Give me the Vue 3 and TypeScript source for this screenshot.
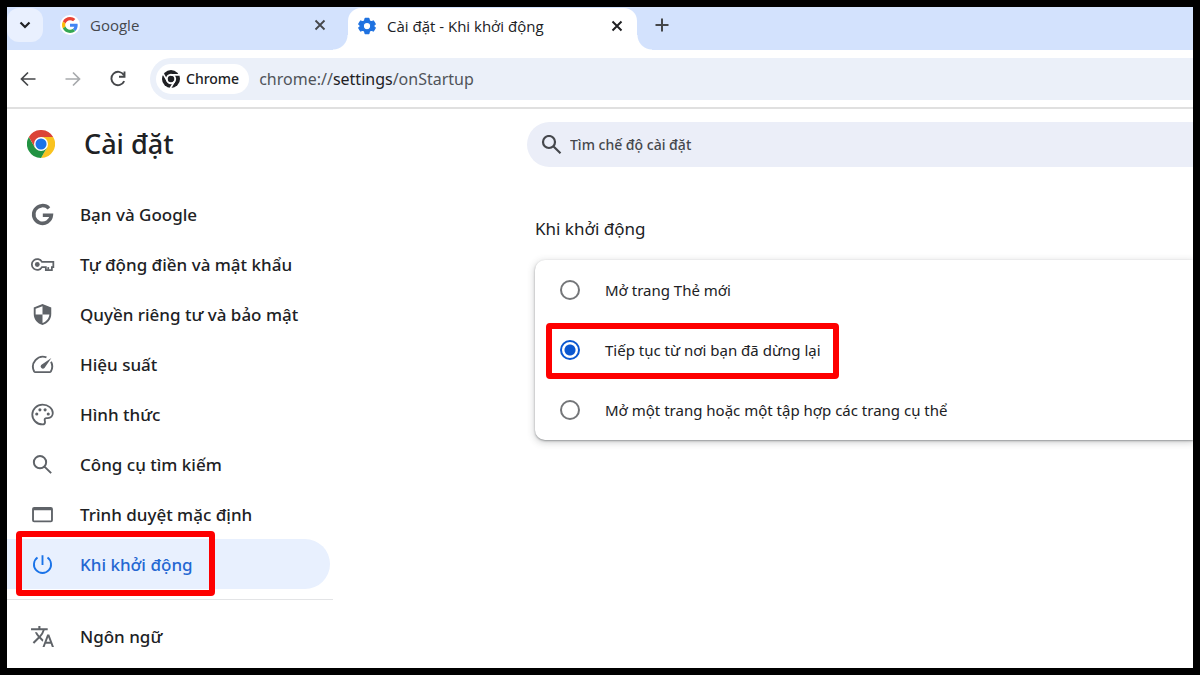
<script setup lang="ts">
import { ref } from 'vue'

interface NavItem {
  id: string
  label: string
  icon: string
}

const mainNav: NavItem[] = [
  { id: 'people', label: 'Bạn và Google', icon: 'google' },
  { id: 'autofill', label: 'Tự động điền và mật khẩu', icon: 'key' },
  { id: 'privacy', label: 'Quyền riêng tư và bảo mật', icon: 'shield' },
  { id: 'performance', label: 'Hiệu suất', icon: 'gauge' },
  { id: 'appearance', label: 'Hình thức', icon: 'palette' },
  { id: 'search', label: 'Công cụ tìm kiếm', icon: 'search' },
  { id: 'defaultBrowser', label: 'Trình duyệt mặc định', icon: 'window' },
  { id: 'onStartup', label: 'Khi khởi động', icon: 'power' },
]
const moreNav: NavItem[] = [{ id: 'languages', label: 'Ngôn ngữ', icon: 'translate' }]
const navGroups = [mainNav, moreNav]

const options = [
  { value: 'newTab', label: 'Mở trang Thẻ mới' },
  { value: 'continue', label: 'Tiếp tục từ nơi bạn đã dừng lại' },
  { value: 'pages', label: 'Mở một trang hoặc một tập hợp các trang cụ thể' },
]

const current = ref('onStartup')
const startup = ref('continue')
const url = ref('chrome://settings/onStartup')
const query = ref('')
</script>

<template>
  <div class="window">
    <header class="tab-strip">
      <button class="tab-search" type="button" aria-label="Tìm kiếm thẻ">
        <svg width="14" height="14" viewBox="0 0 14 14"><path d="M2.500 4.500 7 9l4.500-4.500" fill="none" stroke="currentColor" stroke-width="2.200" /></svg>
      </button>
      <div class="tab tab-google">
        <span class="favicon-disc">
          <svg width="16" height="16" viewBox="0 0 48 48">
            <path fill="#EA4335" d="M24 9.500c3.540 0 6.710 1.220 9.210 3.600l6.850-6.850C35.900 2.380 30.470 0 24 0 14.620 0 6.510 5.380 2.560 13.220l7.980 6.190C12.430 13.720 17.740 9.500 24 9.500z" />
            <path fill="#4285F4" d="M46.980 24.550c0-1.570-.15-3.090-.38-4.550H24v9.020h12.940c-.58 2.960-2.260 5.480-4.780 7.180l7.730 6c4.510-4.180 7.090-10.360 7.090-17.650z" />
            <path fill="#FBBC05" d="M10.530 28.590c-.48-1.450-.76-2.990-.76-4.590s.27-3.140.76-4.590l-7.980-6.190C.92 16.460 0 20.120 0 24c0 3.880.92 7.540 2.560 10.780l7.970-6.190z" />
            <path fill="#34A853" d="M24 48c6.480 0 11.930-2.130 15.890-5.810l-7.730-6c-2.150 1.450-4.920 2.300-8.160 2.300-6.260 0-11.570-4.220-13.470-9.910l-7.980 6.190C6.510 42.620 14.620 48 24 48z" />
          </svg>
        </span>
        <span class="tab-title">Google</span>
        <button class="icon-button" type="button" aria-label="Đóng thẻ Google">
          <svg width="12" height="12" viewBox="0 0 12 12"><path d="m1.500 1.500 9 9m0-9-9 9" stroke="currentColor" stroke-width="1.800" /></svg>
        </button>
      </div>
      <div class="tab tab-active">
        <svg class="gear" width="20" height="20" viewBox="0 0 24 24">
          <path fill="#1f72e0" stroke="#1f72e0" stroke-width="1.500" stroke-linejoin="round" fill-rule="evenodd" d="M9.800 2.800h4.400l.7 3 1.900 1.100 2.900-.9 2.200 3.800-2.200 2.100v.2l2.200 2.100-2.200 3.800-2.900-.9-1.900 1.100-.7 3H9.800l-.7-3-1.900-1.100-2.900.9-2.200-3.800 2.200-2.100v-.2L2.100 9.800 4.300 6l2.900.9 1.900-1.100zM12 7.500a4.500 4.500 0 1 0 0 9 4.500 4.500 0 0 0 0-9z" />
        </svg>
        <span class="tab-title">Cài đặt - Khi khởi động</span>
        <button class="icon-button" type="button" aria-label="Đóng thẻ Cài đặt">
          <svg width="12" height="12" viewBox="0 0 12 12"><path d="m1.500 1.500 9 9m0-9-9 9" stroke="currentColor" stroke-width="2" /></svg>
        </button>
      </div>
      <button class="icon-button new-tab" type="button" aria-label="Thẻ mới">
        <svg width="14" height="14" viewBox="0 0 14 14"><path d="M7 .5v13M.5 7h13" stroke="currentColor" stroke-width="2" /></svg>
      </button>
    </header>

    <div class="toolbar">
      <button class="icon-button" type="button" aria-label="Quay lại">
        <svg width="16" height="16" viewBox="0 0 16 16"><path d="M15.500 8H2M8 1.500 1.500 8 8 14.500" fill="none" stroke="currentColor" stroke-width="1.700" /></svg>
      </button>
      <button class="icon-button" type="button" aria-label="Tiến" disabled>
        <svg width="16" height="16" viewBox="0 0 16 16"><path d="M.5 8H14M8 1.500 14.500 8 8 14.500" fill="none" stroke="currentColor" stroke-width="1.700" /></svg>
      </button>
      <button class="icon-button" type="button" aria-label="Tải lại">
        <svg width="18" height="18" viewBox="0 0 18 18"><path d="M14.800 5A6.700 6.700 0 1 0 15.200 11.200M15.500 1.500v5.300h-5.500" fill="none" stroke="currentColor" stroke-width="1.900" /></svg>
      </button>
      <div class="omnibox">
        <button class="chip" type="button">
          <svg width="18" height="18" viewBox="0 0 18 18">
            <circle cx="9" cy="9" r="9" fill="#202124" />
            <circle cx="9" cy="9" r="4.200" fill="none" stroke="#fff" stroke-width="1.900" />
            <path d="M9 4.800h8.500M5.400 11.100 1.200 3.900M12.600 11.100l-4.200 7.200" stroke="#fff" stroke-width="1.700" fill="none" />
          </svg>
          <span>Chrome</span>
        </button>
        <div class="url">
          <input v-model="url" type="text" aria-label="Thanh địa chỉ" spellcheck="false" />
          <span v-if="url === 'chrome://settings/onStartup'" class="url-display" aria-hidden="true">chrome://<b>settings</b>/onStartup</span>
        </div>
      </div>
    </div>

    <div class="page">
      <aside class="sidebar">
        <div class="brand">
          <svg width="28" height="28" viewBox="0 0 48 48">
            <path fill="#F9C31F" d="M24 12h20.800A24 24 0 0 1 24 48l10.400-18z" />
            <path fill="#229342" d="M3.200 12A24 24 0 0 0 24 48l10.400-18L24 24l-10.400 6z" />
            <path fill="#DB4437" d="M3.200 12 13.600 30 24 24V12h20.800A24 24 0 0 0 3.200 12z" />
            <circle cx="24" cy="24" r="12" fill="#fff" />
            <circle cx="24" cy="24" r="9.500" fill="#1a73e8" />
          </svg>
          <h1>Cài đặt</h1>
        </div>

        <nav aria-label="Cài đặt">
          <ul v-for="(group, index) in navGroups" :key="index">
            <li v-for="item in group" :key="item.id">
              <a
                :href="'#' + item.id"
                :class="{ selected: item.id === current }"
                :aria-current="item.id === current ? 'page' : undefined"
                @click.prevent="current = item.id"
              >
                <svg width="25" height="25" viewBox="0 0 24 24" aria-hidden="true">
                  <path v-if="item.icon === 'google'" d="M18.200 6.100A8.500 8.500 0 1 0 20.500 12.800H12.300" fill="none" stroke="currentColor" stroke-width="3.400" />
                  <g v-else-if="item.icon === 'key'" fill="none" stroke="currentColor" stroke-width="1.700">
                    <path d="M11.800 9.500a5.200 5.200 0 1 0 0 5h3.700v2.900h5.800v-2.900h1.400V9.500z" transform="translate(-.3 0)" />
                    <path d="M17.500 17v-2.500" />
                    <circle cx="7" cy="12" r="2.300" fill="currentColor" stroke="none" />
                  </g>
                  <path v-else-if="item.icon === 'shield'" fill="currentColor" d="M12 2 3.600 5.200v6.300c0 5 3.500 9.300 8.400 10.500 4.900-1.200 8.400-5.500 8.400-10.500V5.200zm0 2v8h6.600c-.4 3.900-3 7-6.600 8.100V12H5.400V6.500z" />
                  <g v-else-if="item.icon === 'gauge'">
                    <path d="M15.800 5.200A9.600 9.600 0 0 0 4 18.700q.4.600 1.100.6h13.800q.7 0 1.100-.6a9.600 9.600 0 0 0 .2-9.300" fill="none" stroke="currentColor" stroke-width="1.800" />
                    <path d="M20.500 5.800 13.900 15.400a2.200 2.200 0 0 1-3.200-3z" fill="currentColor" />
                  </g>
                  <g v-else-if="item.icon === 'palette'">
                    <path d="M12 1.700C6 1.700 1.300 6.400 1.300 12S6 22.300 12 22.300c1.500 0 2.600-1.100 2.600-2.600 0-.7-.4-1.300-.4-2.200 0-1.100.9-1.800 1.900-1.800h1.500c3 0 5.100-2.400 5.100-5.200C22.700 5.600 18 1.700 12 1.700z" transform="translate(1 1) scale(.92)" fill="none" stroke="currentColor" stroke-width="1.900" />
                    <g fill="currentColor"><circle cx="6.500" cy="11.500" r="1.500" /><circle cx="9.500" cy="7.500" r="1.500" /><circle cx="14.500" cy="7.500" r="1.500" /><circle cx="17.500" cy="11.500" r="1.500" /></g>
                  </g>
                  <path v-else-if="item.icon === 'search'" d="M9.600 3.900a5.900 5.900 0 1 1 0 11.800 5.900 5.900 0 0 1 0-11.800zM13.900 14l6.400 6.300" fill="none" stroke="currentColor" stroke-width="1.900" />
                  <path v-else-if="item.icon === 'window'" fill="currentColor" fill-rule="evenodd" d="M4 4.800h16a2 2 0 0 1 2 2v10.700a2 2 0 0 1-2 2H4a2 2 0 0 1-2-2V6.800a2 2 0 0 1 2-2zM3.800 8v9.700h16.400V8z" />
                  <path v-else-if="item.icon === 'power'" d="M12 3v9.500M7.200 5.300a8.200 8.200 0 1 0 9.600 0" fill="none" stroke="currentColor" stroke-width="1.800" />
                  <path v-else fill="currentColor" d="m12.870 15.070-2.540-2.510.03-.03A17.520 17.520 0 0 0 14.070 6H17V4h-7V2H8v2H1v1.990h11.170C11.500 7.920 10.440 9.750 9 11.350 8.070 10.320 7.300 9.190 6.690 8h-2c.73 1.630 1.730 3.170 2.980 4.560l-5.090 5.020L4 19l5-5 3.110 3.110zM18.500 10h-2L12 22h2l1.120-3h4.750L21 22h2zm-2.620 7 1.620-4.330L19.120 17z" />
                </svg>
                <span>{{ item.label }}</span>
                <i v-if="item.id === 'onStartup'" class="marker" aria-hidden="true"></i>
              </a>
            </li>
          </ul>
        </nav>
      </aside>

      <main>
        <label class="search">
          <svg width="24" height="24" viewBox="0 0 24 24" aria-hidden="true"><path d="M9 3a6 6 0 1 1 0 12 6 6 0 0 1 0-12zM13.300 13.300l7.200 7" fill="none" stroke="currentColor" stroke-width="2.200" /></svg>
          <input v-model="query" type="search" placeholder="Tìm chế độ cài đặt" aria-label="Tìm chế độ cài đặt" />
        </label>

        <section aria-labelledby="startup-title">
          <h2 id="startup-title">Khi khởi động</h2>
          <div class="card" role="radiogroup" aria-labelledby="startup-title">
            <label v-for="option in options" :key="option.value" class="option">
              <input v-model="startup" type="radio" name="startup" :value="option.value" />
              <span>{{ option.label }}</span>
              <i v-if="option.value === 'continue'" class="marker" aria-hidden="true"></i>
            </label>
          </div>
        </section>
      </main>
    </div>
  </div>
</template>

<style>
body {
  margin: 0;
  background: #000;
}
</style>

<style scoped>
.window {
  box-sizing: border-box;
  min-height: 100vh;
  display: flex;
  flex-direction: column;
  overflow: hidden;
  border: 7px solid #000;
  background: #fff;
  color: #202124;
  font-family: "Noto Sans", "Open Sans", sans-serif;
}

button,
input {
  font: inherit;
  color: inherit;
}

button {
  display: flex;
  align-items: center;
  justify-content: center;
  padding: 0;
  border: 0;
  background: none;
}

svg {
  flex: none;
}

.tab-strip {
  display: flex;
  height: 43px;
  background: #d3e2fd;
  font-family: "Open Sans", "Noto Sans", sans-serif;
  font-size: 15px;
}

.tab-search {
  width: 36px;
  height: 34px;
  margin-top: 1px;
  border-radius: 12px;
  background: #e9f0fe;
  color: #202124;
}

.tab {
  display: flex;
  align-items: center;
  box-sizing: border-box;
  padding-bottom: 7px;
  color: #45484d;
}

.tab-google {
  width: 305px;
  padding-left: 17px;
  padding-right: 18px;
}

.favicon-disc {
  display: flex;
  align-items: center;
  justify-content: center;
  width: 20px;
  height: 20px;
  margin-right: 10px;
  border-radius: 50%;
  background: #fff;
}

.tab-title {
  flex: 1;
  white-space: nowrap;
}

.icon-button {
  width: 20px;
  height: 20px;
  color: #45474a;
}

.icon-button:disabled {
  color: #a8aaad;
}

.tab-active {
  position: relative;
  width: 289px;
  margin-top: 1px;
  padding-left: 9px;
  padding-right: 10px;
  border-radius: 13px 13px 0 0;
  background: #fff;
  color: #202124;
}

.tab-active .icon-button {
  color: #202124;
}

.tab-active::before,
.tab-active::after {
  content: "";
  position: absolute;
  bottom: 0;
  width: 15px;
  height: 15px;
}

.tab-active::before {
  right: 100%;
  background: radial-gradient(circle at 0 0, transparent 14px, #fff 15px);
}

.tab-active::after {
  left: 100%;
  background: radial-gradient(circle at 100% 0, transparent 14px, #fff 15px);
}

.gear {
  margin-right: 10px;
}

.new-tab {
  margin: 8px 0 0 15px;
}

.toolbar {
  display: flex;
  align-items: center;
  gap: 25px;
  height: 57px;
  padding-left: 11px;
  border-bottom: 2px solid #e0e0e0;
}

.omnibox {
  flex: 1;
  display: flex;
  align-items: center;
  gap: 10px;
  height: 42px;
  margin-left: -3px;
  padding-left: 6px;
  border-radius: 21px 0 0 21px;
  background: #ebf0f9;
}

.chip {
  gap: 6px;
  height: 30px;
  padding: 0 10px 0 6px;
  border-radius: 15px;
  background: #fff;
  font-size: 14px;
  font-weight: 500;
}

.url {
  flex: 1;
  display: grid;
  align-items: center;
  font-size: 16px;
  line-height: 24px;
}

.url > * {
  grid-area: 1 / 1;
}

.url input {
  width: 100%;
  padding: 0;
  border: 0;
  outline: 0;
  background: none;
}

.url input:not(:last-child) {
  color: transparent;
  caret-color: #202124;
}

.url-display {
  color: #50545a;
  pointer-events: none;
}

.url-display b {
  color: #202124;
  font-weight: 400;
}

.page {
  flex: 1;
  display: flex;
}

.sidebar {
  flex: none;
  width: 326px;
  padding-bottom: 7px;
}

.brand {
  display: flex;
  align-items: center;
  gap: 29px;
  box-sizing: border-box;
  height: 80px;
  padding: 0 0 10px 20px;
}

h1 {
  margin: 0;
  font-size: 27px;
  font-weight: 500;
  line-height: 36px;
}

ul {
  margin: 0;
  padding: 0;
  list-style: none;
}

ul + ul {
  margin-top: 10px;
  padding-top: 11px;
  border-top: 1px solid #e3e4e6;
}

nav a {
  position: relative;
  display: flex;
  align-items: center;
  gap: 25px;
  height: 50px;
  margin-right: 3px;
  padding-left: 23px;
  border-radius: 0 25px 25px 0;
  color: #202124;
  font-size: 17px;
  font-weight: 500;
  text-decoration: none;
}

nav a svg {
  color: #5f6368;
}

nav a.selected {
  background: #e8f0fe;
  color: #2467d2;
}

nav a.selected svg {
  color: #1a73e8;
}

.marker {
  position: absolute;
  border: 6px solid #fe0000;
  border-radius: 4px;
  pointer-events: none;
}

nav .marker {
  inset: -8px 115px -7px 9px;
}

main {
  flex: 1;
  min-width: 0;
  padding: 13px 0 0 194px;
}

.search {
  display: flex;
  align-items: center;
  gap: 6px;
  height: 45px;
  padding-left: 13px;
  border-radius: 23px 0 0 23px;
  background: #ebeef8;
  color: #45474c;
  font-size: 14px;
  font-weight: 500;
}

.search input {
  flex: 1;
  min-width: 0;
  padding: 0;
  border: 0;
  outline: 0;
  background: none;
}

.search input::placeholder {
  color: inherit;
  opacity: 1;
}

section {
  padding: 49px 0 0 8px;
}

h2 {
  margin: 0 0 18px;
  font-size: 17px;
  font-weight: 400;
  line-height: 26px;
}

.card {
  border-radius: 10px 0 0 10px;
  background: #fff;
  box-shadow: 0 1px 2px rgb(60 64 67 / 45%), 0 2px 7px 1px rgb(60 64 67 / 22%);
}

.option {
  position: relative;
  display: flex;
  align-items: center;
  gap: 25px;
  width: fit-content;
  height: 60px;
  padding-left: 25px;
  font-size: 15px;
}

.option input {
  appearance: none;
  box-sizing: border-box;
  width: 20px;
  height: 20px;
  margin: 0;
  border: 2px solid #747679;
  border-radius: 50%;
  background: #fff;
}

.option input:checked {
  border-color: #0b57d0;
  background: radial-gradient(circle, #0b57d0 5px, #fff 6px);
}

.option .marker {
  inset: 3px -18px 1px 11px;
}
</style>
